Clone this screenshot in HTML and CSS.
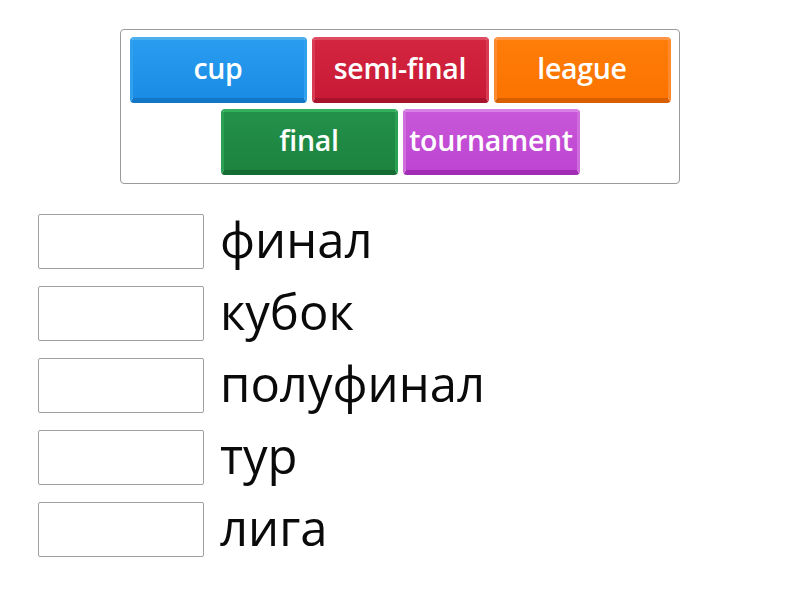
FILE: index.html
```html
<!DOCTYPE html>
<html>
<head>
<meta charset="utf-8">
<link rel="stylesheet" href="styles.css">
</head>
<body>
<div class="page">
  <div class="bank">
    <div class="bank-row">
      <div class="tile blue">cup</div>
      <div class="tile red">semi-final</div>
      <div class="tile orange">league</div>
    </div>
    <div class="bank-row">
      <div class="tile green">final</div>
      <div class="tile purple">tournament</div>
    </div>
  </div>
  <div class="rows">
    <div class="row"><div class="slot"></div><div class="word">финал</div></div>
    <div class="row"><div class="slot"></div><div class="word">кубок</div></div>
    <div class="row"><div class="slot"></div><div class="word">полуфинал</div></div>
    <div class="row"><div class="slot"></div><div class="word">тур</div></div>
    <div class="row"><div class="slot"></div><div class="word">лига</div></div>
  </div>
</div>
</body>
</html>
```
FILE: styles.css
```css
* { box-sizing: border-box; }
html, body { margin: 0; padding: 0; background: #fff; }
body { font-family: "Open Sans", "Noto Sans", sans-serif; width: 800px; height: 600px; overflow: hidden; }
.page { padding-top: 29px; }
.bank {
  width: 560px;
  margin: 0 auto;
  border: 1px solid #9a9a9a;
  border-radius: 4px;
  padding: 7px 0 8px;
  display: flex;
  flex-direction: column;
  align-items: center;
  gap: 6px;
}
.bank-row { display: flex; gap: 5px; }
.tile {
  width: 177px;
  height: 66px;
  border-radius: 4px;
  display: flex;
  align-items: center;
  justify-content: center;
  color: #fff;
  font-weight: 600;
  font-size: 28.5px;
  letter-spacing: -0.3px;
  border-style: solid;
  border-width: 3px 3px 5px 3px;
  padding-bottom: 3px;
}
.blue { background: linear-gradient(#2a9cf0, #1a8ce4); border-color: #4aaeef #2ea0ee #1377c8 #2ea0ee; }
.red { background: linear-gradient(#d42540, #c81a36); border-color: #de4a60 #d73a52 #a8122a #d73a52; }
.orange { background: linear-gradient(#ff7d0a, #fb7300); border-color: #ff9444 #ff8a2e #d85f00 #ff8a2e; }
.green { background: linear-gradient(#23904a, #1c8440); border-color: #32b05e #2aa055 #156c33 #2aa055; }
.purple { background: linear-gradient(#c857d8, #be45d2); border-color: #d880e4 #d06ddd #a02db4 #d06ddd; }
.rows {
  margin-top: 30px;
  padding-left: 38px;
  display: flex;
  flex-direction: column;
  gap: 17px;
}
.row { display: flex; align-items: center; height: 55px; }
.slot {
  width: 166px;
  height: 55px;
  border: 1px solid #a0a0a0;
  border-radius: 2px;
  background: #fff;
}
.word {
  margin-left: 16px;
  font-size: 49px;
  color: #0a0a0a;
  line-height: 55px;
  padding-bottom: 4px;
}
```
